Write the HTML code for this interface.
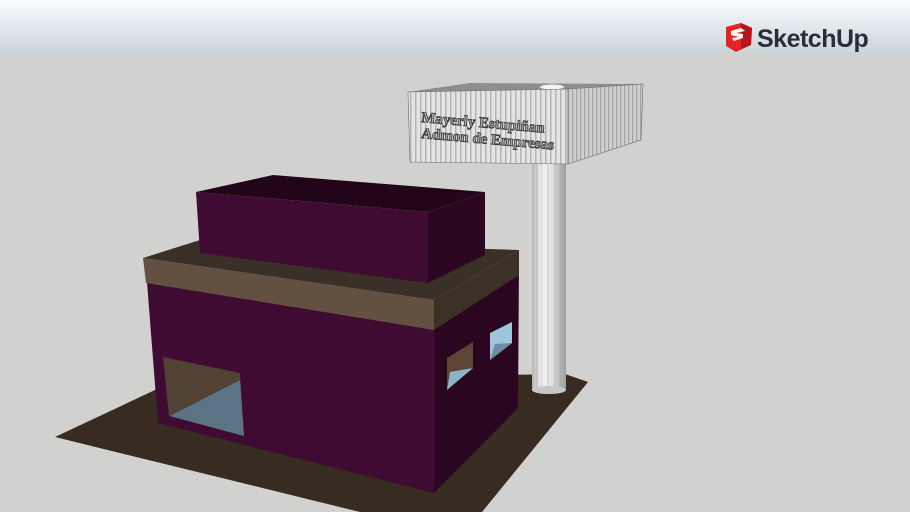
<!DOCTYPE html>
<html><head><meta charset="utf-8"><style>
html,body{margin:0;padding:0;width:910px;height:512px;overflow:hidden;background:#d1d1cf}
svg{display:block}
</style></head><body>
<svg width="910" height="512" viewBox="0 0 910 512" xmlns="http://www.w3.org/2000/svg">
<defs>
<linearGradient id="sky" x1="0" y1="0" x2="0" y2="1">
<stop offset="0" stop-color="#fbfcfd"/><stop offset="1" stop-color="#c9d7de"/>
</linearGradient>
<pattern id="str" width="5" height="10" patternUnits="userSpaceOnUse">
<rect width="5" height="10" fill="#e4e4e4"/><rect width="1.5" height="10" fill="#b4b4b4"/>
</pattern>
<pattern id="str2" width="4" height="10" patternUnits="userSpaceOnUse">
<rect width="4" height="10" fill="#d0d0d0"/><rect width="1.3" height="10" fill="#a6a6a6"/>
</pattern>
<linearGradient id="pole" x1="0" x2="1">
<stop offset="0" stop-color="#b5b5b5"/><stop offset=".3" stop-color="#f4f4f4"/><stop offset=".6" stop-color="#e0e0e0"/><stop offset="1" stop-color="#9b9b9b"/>
</linearGradient>
</defs>
<rect width="910" height="52" fill="url(#sky)"/>
<rect y="52" width="910" height="460" fill="#d1d1cf"/>
<polygon points="55,437 155,390 160,380 565,374 588,382 482,512 360,512" fill="#372b22"/>
<rect x="532" y="150" width="34" height="240" fill="url(#pole)"/>
<g stroke="#8a8a8a" stroke-width="0.6" opacity=".6">
<line x1="537" y1="150" x2="537" y2="390"/><line x1="542" y1="150" x2="542" y2="390"/><line x1="548" y1="150" x2="548" y2="390"/><line x1="555" y1="150" x2="555" y2="390"/><line x1="561" y1="150" x2="561" y2="390"/>
</g>
<ellipse cx="549" cy="390" rx="17" ry="4" fill="#c8c8c8"/>
<polygon points="408,92 470,83 643,84 568,89" fill="#8e8e8e"/>
<ellipse cx="552" cy="87" rx="12" ry="2.5" fill="#f2f2f2"/>
<polygon points="408,92 568,89 568,164 410,162" fill="url(#str)" stroke="#6a6a6a" stroke-width=".6"/>
<polygon points="568,89 643,84 641,140 568,164" fill="url(#str2)" stroke="#6a6a6a" stroke-width=".6"/>
<text x="421" y="122" font-family="Liberation Serif, serif" font-size="15" fill="#aaa" stroke="#3a3a3a" stroke-width=".8" font-weight="bold" transform="rotate(5 421 122)">Mayerly Estupiñan</text>
<text x="421" y="138" font-family="Liberation Serif, serif" font-size="15" fill="#aaa" stroke="#3a3a3a" stroke-width=".8" font-weight="bold" transform="rotate(5 421 138)">Admon de Empresas</text>
<polygon points="147,282 434,328 434,493 158,423" fill="#3f0b32"/>
<polygon points="434,305 519,262 518,408 434,493" fill="#2a0621"/>
<polygon points="163,357 240,373 244,436 169,416" fill="#524234"/>
<polygon points="170,416 240,380 244,436" fill="#5b7384"/>
<polygon points="447,358 473,342 473,368 447,390" fill="#5a4536"/>
<polygon points="447,390 450,372 473,368" fill="#8cb4c8"/>
<polygon points="490,333 512,322 512,343 490,360" fill="#9ec6da"/>
<polygon points="490,360 495,344 512,343" fill="#6c8ea0"/>
<polygon points="143,258 200,240 519,250 434,300" fill="#3b3028"/>
<polygon points="143,258 434,300 434,330 146,283" fill="#625041"/>
<polygon points="434,300 519,250 519,275 434,330" fill="#3c3027"/>
<polygon points="196,192 273,175 485,192 428,212" fill="#220518"/>
<polygon points="196,192 428,212 428,283 200,253" fill="#3f0b32"/>
<polygon points="428,212 485,192 485,255 428,283" fill="#2a0621"/>
<g transform="translate(725,22)">
<polygon points="1,5 16,1 27,6 26,23 11,30 1,24" fill="#e52228"/>
<polygon points="16,1 27,6 26,23 16,27" fill="#b5151b"/>
<path d="M6,9 L16,6 L20,9 L11,11 L18,12 L18,16 L9,19 L7,16 L14,15 L6,13 Z" fill="#fff"/>
</g>
<text x="757" y="47" font-family="Liberation Sans, sans-serif" font-weight="bold" font-size="25" fill="#2b2d3b" letter-spacing="-0.5">SketchUp</text>
</svg>
</body></html>
